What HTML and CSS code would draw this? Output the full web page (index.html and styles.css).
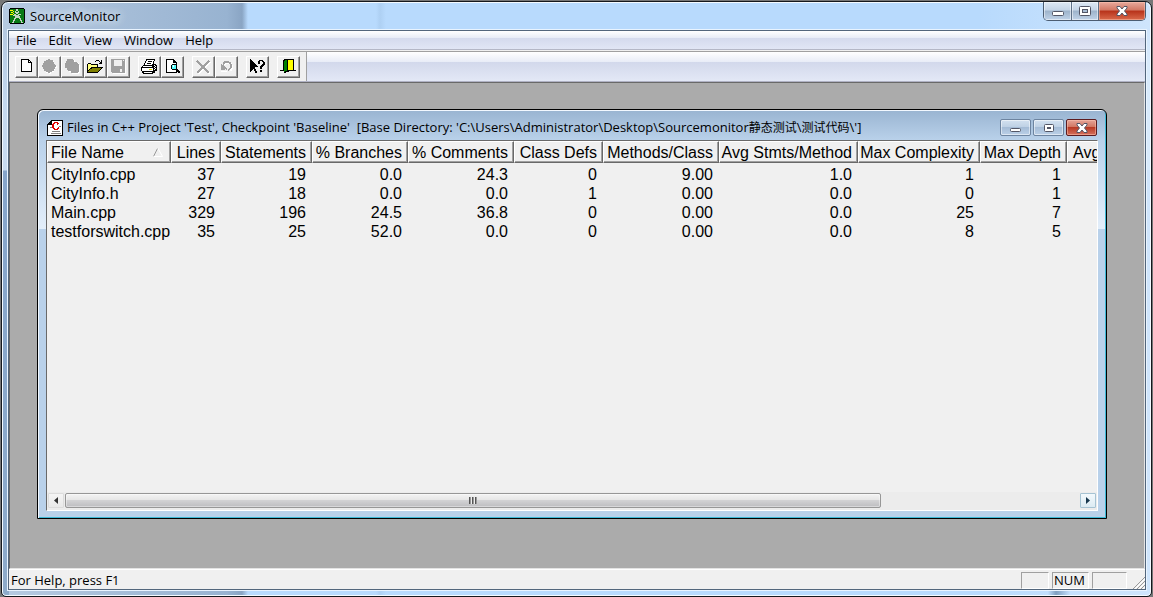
FILE: index.html
```
<!DOCTYPE html>
<html lang="en">
<head>
  <meta charset="UTF-8">
  <meta name="viewport" content="width=device-width, initial-scale=1.0">
  <title>SourceMonitor</title>
  <link rel="stylesheet" href="styles.css">
</head>
<body>
  <div class="window">
    <header class="titlebar">
      <svg class="app-icon" viewBox="0 0 16 16" shape-rendering="crispEdges">
        <path fill="#000" d="M1 0h14v1h1v14h-1v1H1v-1H0V1h1z"/>
        <path fill="#087a14" d="M1 1h14v14H1z"/>
        <path fill="#ff0" d="M1 2h3v1H1zM4 3h1v1H4zM2 4h2v1H2zM4 5h1v1H4zM1 6h3v1H1z"/>
        <path fill="#c4d4c4" d="M7 1h2v2H7zM6 3h1v1h2V3h1v2H6zM7 5h2v1H7zM5 6h2v1h2V6h3v1h-2v1h1v2h1v2h1v2h1v1h-2v-2h-1v-2h-1v-1H7v1H6v2H5v2H3v-1h1v-2h1v-2h1V8H4V7h1z"/>
      </svg>
      <h1 class="title">SourceMonitor</h1>
      <div class="caption-buttons">
        <button type="button" class="cap" aria-label="Minimize">
          <svg width="14" height="12" viewBox="0 0 14 12"><rect x="1.500" y="6.500" width="11" height="4" rx="1" fill="#fff" stroke="#535666"/></svg>
        </button>
        <button type="button" class="cap" aria-label="Maximize">
          <svg width="14" height="12" viewBox="0 0 14 12"><rect x="1.500" y="1.500" width="11" height="9" rx="1" fill="#fff" stroke="#535666"/><rect x="4.500" y="4.500" width="5" height="3" fill="#a9bdd4" stroke="#535666"/></svg>
        </button>
        <button type="button" class="cap cap-close" aria-label="Close">
          <svg width="14" height="12" viewBox="0 0 14 12"><path d="M2 1.500h3l2 2.500 2-2.500h3v1.500L9.500 6l2.500 3v1.500H9L7 8l-2 2.500H2V9l2.500-3L2 3z" fill="#fff" stroke="#535666"/></svg>
        </button>
      </div>
    </header>

    <main class="client">
      <nav class="menubar">
        <button type="button">File</button>
        <button type="button">Edit</button>
        <button type="button">View</button>
        <button type="button">Window</button>
        <button type="button">Help</button>
      </nav>

      <div class="rebar">
        <div class="toolbar">
          <div class="group">
            <button type="button" class="tool" aria-label="New">
              <svg viewBox="0 0 16 16" shape-rendering="crispEdges"><path fill="#000" d="M3 0h8v1h1v1h1v1h1v10H3z"/><path fill="#fff" d="M4 1h6v3h3v8H4zM11 2h1v1h-1z"/></svg>
            </button>
            <button type="button" class="tool" aria-label="Checkpoint" disabled>
              <svg viewBox="0 0 16 16" shape-rendering="crispEdges"><path fill="#fff" d="M8 1h2v1h3v3h1v2h2v2h-2v2h-1v2h-3v2H8v-1H5v-2H3V9h2z"/><path fill="#a0a0a0" d="M7 0h2v1h3v2h1v2h1v1h1v2h-1v2h-1v2h-2v1H9v1H7v-1H5v-1H3v-2H2V8H1V6h1V4h1V2h2V1h2z"/></svg>
            </button>
            <button type="button" class="tool" aria-label="Checkpoints" disabled>
              <svg viewBox="0 0 16 16" shape-rendering="crispEdges"><path fill="#fff" d="M5 1h6v3h4v2h1v8h-1v1H8v-2H5v-3H3V8h2z"/><path fill="#a0a0a0" d="M3 0h6v1h1v2h3v1h1v1h1v8h-1v1H7v-2H4v-1H3v-2H1V4h1V2h1z"/></svg>
            </button>
            <button type="button" class="tool" aria-label="Open">
              <svg viewBox="0 0 16 16" shape-rendering="crispEdges"><path fill="#000" d="M9 1h3v1H9zM8 2h1v1H8zM12 2h1v1h-1zM14 1h1v4h-3V4h1V3h1zM1 4h3v1h7v3h5v1h-1v1h-1v1h-1v1h-1v1h-1v1H0V5h1z"/><path fill="#ffff80" d="M1 5h3v1h6v2H4v1H3v1H2v1H1z"/><path fill="#808000" d="M5 9h9v1h-1v1h-1v1h-1v1H1v-1h1v-1h1v-1h2z"/></svg>
            </button>
            <button type="button" class="tool" aria-label="Save" disabled>
              <svg viewBox="0 0 16 16" shape-rendering="crispEdges"><path fill="#fff" d="M2 1h14v14H3v-1H2z"/><path fill="#a0a0a0" d="M1 0h14v14H2v-1H1z"/><path fill="#f0f0f0" d="M4 1h8v6H4zM13 1h1v1h-1zM10 10h2v3h-2z"/></svg>
            </button>
          </div>
          <div class="group">
            <button type="button" class="tool" aria-label="Print">
              <svg viewBox="0 0 16 16" shape-rendering="crispEdges"><path fill="#000" d="M5 0h9v2h-1v3h2v1h1v6h-2v2h-2v1H2v-1H1v-2H0V8h1V7h1V6h1V4h1V2h1z"/><path fill="#fff" d="M6 1h7v1h-1v3h-1v1H4V4h1V2h1zM3 7h8v1H2V7zM1 9h11v3H1zM3 13h8v1H3zM13 6h1v1h-1zM14 7h1v1h-1zM13 8h1v1h-1zM14 9h1v1h-1zM13 10h1v1h-1z"/><path fill="#000" d="M7 2h4v1H7zM6 4h4v1H6z"/><path fill="#dddd00" d="M8 10h3v1H8z"/></svg>
            </button>
            <button type="button" class="tool" aria-label="Print Preview">
              <svg viewBox="0 0 16 16" shape-rendering="crispEdges"><path fill="#000" d="M2 0h8v1h1v1h1v1h1v11H2z"/><path fill="#fff" d="M3 1h6v3h3v9H3z"/><path fill="#000" d="M8 5h4v1h1v4h1v1h1v1h1v2h-2v-1h-1v-1h-1v-1H8v-1H7V6h1z"/><path fill="#5ff" d="M8 6h4v4H8z"/><path fill="#fff" d="M9 6h1v2H9z"/></svg>
            </button>
          </div>
          <div class="group">
            <button type="button" class="tool" aria-label="Delete" disabled>
              <svg viewBox="0 0 16 16" shape-rendering="crispEdges"><path fill="none" stroke="#fff" stroke-width="2" d="M3 3l12 12M15 3L3 15"/><path fill="none" stroke="#a0a0a0" stroke-width="2" d="M2 2l12 12M14 2L2 14"/></svg>
            </button>
            <button type="button" class="tool" aria-label="Undo" disabled>
              <svg viewBox="0 0 16 16" shape-rendering="crispEdges"><path fill="#fff" d="M7 3h5v1h2v2h1v4h-1v2h-2v-2h1V6h-1V5H8v1H6V4h1zM3 12h6v1H3z"/><path fill="#a0a0a0" d="M6 2h5v1h2v2h1v4h-1v1h-1v1h-1v1h-1v-2h1V9h1V5h-1V4H7v1H6v2h1v1h1v1h1v2H3V5h1v1h1V3h1z"/><path fill="#f0f0f0" d="M7 10h1v1H7z"/></svg>
            </button>
          </div>
          <div class="group">
            <button type="button" class="tool" aria-label="Context Help">
              <svg viewBox="0 0 16 16" shape-rendering="crispEdges"><path fill="#000" d="M1 0h1v1h1v1h1v1h1v1h1v1h1v1h1v1h1v1H6v2h1v2h1v2H6v-2H5v-2H4v1H3v1H2v1H1zM10 1h4v1h1v1h1v3h-1v1h-1v1h-1v2h-2V7h1V6h1V5h1V3h-1V2h-2v3H9V2h1zM11 11h2v2h-2z"/></svg>
            </button>
          </div>
          <div class="group">
            <button type="button" class="tool" aria-label="Exit">
              <svg viewBox="0 0 16 16" shape-rendering="crispEdges"><path fill="#000" d="M4 0h10v11h2v1H9v1H6v1H4v-2H0v-1h3V1h1z"/><path fill="#ff0" d="M8 1h5v10H8z"/><path fill="#008000" d="M4 2h1V1h2v11H5v1H4z"/></svg>
            </button>
          </div>
        </div>
      </div>

      <div class="mdi">
        <section class="child">
          <header class="child-title">
            <svg class="child-icon" viewBox="0 0 16 16" shape-rendering="crispEdges">
              <path fill="#000" d="M4 0h12v16H0V4h1V3h1V2h1V1h1z"/>
              <path fill="#fff" d="M5 1h10v14H1V5h4z"/>
              <path fill="#000" d="M2 3h1V2h1v2H2z"/>
              <path fill="#808080" d="M3 7h2v1H3zM12 6h2v1h-2zM5 11h8v1H5zM4 13h10v1H4z"/>
              <path fill="#e00000" d="M7 2h4v1h1v1h-1v1h-1V3H8v1H7v4h1v1h2V8h1V7h1v2h-1v1H7V9H6V8H5V4h1V3h1z"/>
            </svg>
            <h2 class="title child-name">Files in C++ Project 'Test', Checkpoint 'Baseline'&nbsp; [Base Directory: 'C:\Users\Administrator\Desktop\Sourcemonitor<span class="cjk">静态测试</span>\<span class="cjk">测试代码</span>\']</h2>
            <div class="child-buttons">
              <button type="button" class="cap" aria-label="Minimize files">
                <svg width="14" height="12" viewBox="0 0 14 12"><rect x="1.500" y="6.500" width="10" height="3" rx="1" fill="#fff" stroke="#535666"/></svg>
              </button>
              <button type="button" class="cap" aria-label="Maximize files">
                <svg width="14" height="12" viewBox="0 0 14 12"><rect x="2.500" y="2.500" width="9" height="7" rx="1" fill="#fff" stroke="#535666"/><rect x="5.500" y="5.500" width="3" height="1" fill="#fff" stroke="#535666"/></svg>
              </button>
              <button type="button" class="cap cap-close" aria-label="Close files">
                <svg width="14" height="12" viewBox="0 0 14 12"><path d="M2 1.500h3l2 2.500 2-2.500h3v1.500L9.500 6l2.500 3v1.500H9L7 8l-2 2.500H2V9l2.500-3L2 3z" fill="#fff" stroke="#535666"/></svg>
              </button>
            </div>
          </header>

          <div class="list">
            <div class="list-view">
              <table class="files">
                <colgroup>
                  <col class="c-name">
                  <col class="c-lines">
                  <col class="c-statements">
                  <col class="c-branches">
                  <col class="c-comments">
                  <col class="c-defs">
                  <col class="c-methods">
                  <col class="c-stmts">
                  <col class="c-complexity">
                  <col class="c-depth">
                  <col class="c-avg">
                </colgroup>
                <thead>
                  <tr>
                    <th><span class="sorted">File Name
                      <svg width="10" height="9" viewBox="0 0 10 9"><path fill="none" stroke="#999" d="M.5 8.500L4.500.5"/><path fill="none" stroke="#fff" d="M5 .5l4.500 8H.5"/></svg>
                    </span></th>
                    <th>Lines</th>
                    <th>Statements</th>
                    <th>% Branches</th>
                    <th>% Comments</th>
                    <th>Class Defs</th>
                    <th>Methods/Class</th>
                    <th>Avg Stmts/Method</th>
                    <th>Max Complexity</th>
                    <th>Max Depth</th>
                    <th>Avg</th>
                  </tr>
                </thead>
                <tbody>
                  <tr>
                    <td>CityInfo.cpp</td><td>37</td><td>19</td><td>0.0</td><td>24.3</td><td>0</td><td>9.00</td><td>1.0</td><td>1</td><td>1</td><td></td>
                  </tr>
                  <tr>
                    <td>CityInfo.h</td><td>27</td><td>18</td><td>0.0</td><td>0.0</td><td>1</td><td>0.00</td><td>0.0</td><td>0</td><td>1</td><td></td>
                  </tr>
                  <tr>
                    <td>Main.cpp</td><td>329</td><td>196</td><td>24.5</td><td>36.8</td><td>0</td><td>0.00</td><td>0.0</td><td>25</td><td>7</td><td></td>
                  </tr>
                  <tr>
                    <td>testforswitch.cpp</td><td>35</td><td>25</td><td>52.0</td><td>0.0</td><td>0</td><td>0.00</td><td>0.0</td><td>8</td><td>5</td><td></td>
                  </tr>
                </tbody>
              </table>
            </div>
            <div class="scrollbar">
              <button type="button" class="arrow" aria-label="Scroll left">
                <svg width="4" height="7" viewBox="0 0 4 7"><path fill="#333" d="M4 0v7L0 3.500z"/></svg>
              </button>
              <div class="track">
                <div class="thumb"><span class="grip"></span></div>
              </div>
              <button type="button" class="arrow arrow-right" aria-label="Scroll right">
                <svg width="4" height="7" viewBox="0 0 4 7"><path fill="#17384f" d="M0 0v7l4-3.500z"/></svg>
              </button>
            </div>
          </div>
        </section>
      </div>

      <footer class="statusbar">
        <span class="message">For Help, press F1</span>
        <span class="pane pane-caps"></span>
        <span class="pane pane-num">NUM</span>
        <span class="pane pane-scroll"></span>
        <svg class="size-grip" viewBox="0 0 12 12"><path stroke="#999" d="M0 12L12 0M4 12l8-8M8 12l4-4"/><path stroke="#fff" d="M2 12L12 2M6 12l6-6M10 12l2-2"/></svg>
      </footer>
    </main>
  </div>
</body>
</html>
```

FILE: styles.css
```
* {
  box-sizing: border-box;
}
body {
  margin: 0;
  padding: 1px 1px 0;
  height: 100vh;
  background: #777;
  font-family: "Open Sans", "Noto Sans CJK SC", sans-serif;
  font-size: 13px;
  color: #000;
  overflow: hidden;
}
button {
  font: inherit;
  color: inherit;
  padding: 0;
  margin: 0;
  border: none;
  background: none;
}
svg {
  display: block;
}

/* outer window frame */
.window {
  display: flex;
  flex-direction: column;
  height: 100%;
  padding: 0 5px 6px 6px;
  border: 1px solid #15181d;
  border-radius: 7px 7px 5px 5px;
  box-shadow: inset 0 0 0 1px #f4faff;
  background:
    linear-gradient(to right, transparent 1046px, #7f9fc0 1054px, transparent 1068px) bottom / 100% 7px no-repeat,
    linear-gradient(to bottom, transparent 30px, #d8eafb 60px, #d8eafb 168px, transparent 168px) right / 7px 100% no-repeat,
    linear-gradient(to bottom, transparent 30px, #c4d8ee 100px, #c9dcf0 168px, #86a5ca 169px, #8eabca) left / 7px 100% no-repeat,
    linear-gradient(to right, #b6cae1, #a4bcd7 130px, #98b3d1 225px, #8aa5c4 240px, #b8dafd 246px, #b8dafd 374px, #aed0f3 378px, #b8dafd 384px, #b8dafd 85%, #cfe5fc);
}
.titlebar {
  display: flex;
  align-items: center;
  height: 28px;
  padding: 0 0 0 1px;
  flex: none;
}
.app-icon {
  width: 16px;
  height: 16px;
}
.title {
  margin: 0;
  font-size: 13px;
  font-weight: normal;
  line-height: 18px;
  white-space: nowrap;
}
.cjk {
  font-size: 12px;
}
.titlebar .title {
  flex: 1;
  padding-left: 5px;
  text-shadow: 0 0 8px #e6eff8, 0 0 10px #e6eff8;
}

.caption-buttons {
  display: flex;
  align-self: flex-start;
  border: 1px solid #4c5d72;
  border-top: none;
  border-radius: 0 0 5px 5px;
  overflow: hidden;
}
.cap {
  display: flex;
  align-items: center;
  justify-content: center;
  width: 27px;
  height: 18px;
  background: linear-gradient(#dde8f4, #c4d4e6 45%, #9db3cb 50%, #c0d3e8);
  box-shadow: inset 0 0 0 1px rgba(255, 255, 255, 0.5);
}
.cap + .cap {
  border-left: 1px solid #5e7188;
}
.cap-close {
  width: 47px;
  background: linear-gradient(#e8aa9d, #d27864 45%, #b7321a 50%, #d96a4c);
  box-shadow: inset 0 0 0 1px rgba(255, 200, 180, 0.5);
}

.client {
  display: flex;
  flex-direction: column;
  flex: 1;
  min-height: 0;
  border: 1px solid #52667c;
  outline: 1px solid #e9f4ff;
  background: #f0f0f0;
}

/* menu and toolbar */
.menubar {
  display: flex;
  flex: none;
  height: 19px;
  padding-left: 1px;
  border-bottom: 1px solid #b4b7c6;
  background: linear-gradient(#fff, #e6ebf6 7px, #d4daed 7px, #e1e6f5);
}
.menubar button {
  padding: 0 6px;
  line-height: 18px;
}
.rebar {
  display: flex;
  flex: none;
  height: 31px;
  margin-top: 1px;
  border-top: 1px solid #a0a0a0;
  border-bottom: 1px solid #b0b2c4;
  background: linear-gradient(#fff, #e8ecf7 10px, #d2d8eb 10px, #e3e8f6);
}
.toolbar {
  display: flex;
  gap: 8px;
  padding: 4px 6px 0;
  border-right: 1px solid #a0a0a0;
  background: #f0f0f0;
}
.group {
  display: flex;
}
.tool {
  width: 23px;
  height: 22px;
  padding: 2px;
  border: 1px solid;
  border-color: #fff #696969 #696969 #fff;
  box-shadow: inset -1px -1px 0 #a0a0a0;
  background: #f0f0f0;
}
.tool svg {
  width: 16px;
  height: 16px;
}

/* MDI area */
.mdi {
  display: flex;
  flex: 1;
  min-height: 0;
  padding: 26px 37px 49px 27px;
  border: 1px solid #696969;
  border-right-color: #e3e3e3;
  border-bottom-color: #e3e3e3;
  background: #ababab;
}
.child {
  display: flex;
  flex-direction: column;
  flex: 1;
  min-width: 0;
  padding: 0 8px 7px;
  border: 1px solid #000;
  border-radius: 6px 6px 0 0;
  box-shadow: inset 1px 1px 0 #f2f8ff, inset -1px -1px 0 #3cb9d6;
  background:
    linear-gradient(#99b4d1, #b9d1ea 30px, #e3eefa 119px, transparent 119px) left / 8px 100% no-repeat,
    linear-gradient(#99b4d1, #b9d1ea 30px, #e3eefa 119px, transparent 119px) right / 8px 100% no-repeat,
    linear-gradient(#99b4d1, #b9d1ea 30px);
}
.child-title {
  display: flex;
  align-items: center;
  flex: none;
  height: 30px;
  padding: 6px 1px 1px;
}
.child-icon {
  flex: none;
  width: 16px;
  height: 16px;
}
.child-name {
  flex: 1;
  padding-left: 4px;
}
.child-buttons {
  display: flex;
  gap: 2px;
}
.child-buttons .cap {
  width: 31px;
  height: 17px;
  border: 1px solid #6d84a0;
  border-radius: 2px;
  background: linear-gradient(#d3e1f0, #bfd1e5 45%, #a5bcd6 50%, #bbd0e8);
}
.child-buttons .cap-close {
  border-color: #5c1c20;
  background: linear-gradient(#e5a497, #d27864 45%, #b93a24 50%, #d4705c);
}

/* file list */
.list {
  display: flex;
  flex-direction: column;
  flex: 1;
  min-height: 0;
  border: 1px solid;
  border-color: #696969 #fff #fff #696969;
  background: #f0f0f0;
}
.list-view {
  flex: 1;
  min-height: 0;
  overflow: hidden;
}
.files {
  width: 1150px;
  table-layout: fixed;
  border-collapse: separate;
  border-spacing: 0;
  font-family: "Liberation Sans", Arial, sans-serif;
  font-size: 16px;
  line-height: 19px;
}
.c-name { width: 124px; }
.c-lines { width: 50px; }
.c-statements { width: 91px; }
.c-branches { width: 96px; }
.c-comments { width: 106px; }
.c-defs { width: 89px; }
.c-methods { width: 116px; }
.c-stmts { width: 139px; }
.c-complexity { width: 122px; }
.c-depth { width: 87px; }
.files th {
  height: 22px;
  padding: 0 5px 0 0;
  font-weight: normal;
  text-align: right;
  white-space: nowrap;
  border: 1px solid;
  border-color: #fff #696969 #696969 #fff;
  box-shadow: inset -1px -1px 0 #a0a0a0;
}
.files th:first-child,
.files th:last-child {
  text-align: left;
}
.files th:first-child {
  padding-left: 3px;
}
.files th:last-child {
  padding-left: 5px;
}
.sorted {
  display: flex;
  align-items: center;
  justify-content: space-between;
  padding-right: 2px;
}
.files td {
  padding: 0 6px 0 4px;
  text-align: right;
  white-space: nowrap;
}
.files td:first-child {
  padding-right: 0;
  text-align: left;
}
.files tbody tr:first-child td {
  padding-top: 2px;
}

.scrollbar {
  display: flex;
  flex: none;
  height: 18px;
  padding: 1px 1px 2px;
  gap: 1px;
  background: #ececec;
}
.arrow {
  display: flex;
  align-items: center;
  justify-content: center;
  width: 16px;
  height: 15px;
  border: 1px solid #dcdcdc;
  border-radius: 1px;
  background: linear-gradient(#f5f5f5, #e9e9e9);
}
.arrow-right {
  border-color: #a6c3d3;
  background: linear-gradient(#f3f9fc, #dcebf3);
}
.track {
  flex: 1;
}
.thumb {
  display: flex;
  align-items: center;
  justify-content: center;
  width: 80.5%;
  height: 15px;
  border: 1px solid #979797;
  border-radius: 2px;
  box-shadow: inset 0 0 0 1px rgba(255, 255, 255, 0.4);
  background: linear-gradient(#f4f4f4, #e6e6e6 45%, #d2d2d4 50%, #bdbdc0);
}
.grip {
  width: 8px;
  height: 7px;
  background: repeating-linear-gradient(to right, #555 0, #555 1px, #999 1px, #999 2px, #eee 2px, #eee 3px);
}

/* status bar */
.statusbar {
  display: flex;
  flex: none;
  gap: 3px;
  height: 20px;
  padding: 2px 0 0 2px;
  border-top: 1px solid #fff;
  line-height: 17px;
}
.message {
  flex: 1;
}
.pane {
  height: 17px;
  border: 1px solid;
  border-color: #a0a0a0 #fff #fff #a0a0a0;
  line-height: 15px;
}
.pane-caps {
  width: 28px;
}
.pane-num {
  width: 37px;
  padding-left: 1px;
}
.pane-scroll {
  width: 35px;
}
.size-grip {
  align-self: flex-end;
  width: 12px;
  height: 12px;
  margin-left: 3px;
}
```
